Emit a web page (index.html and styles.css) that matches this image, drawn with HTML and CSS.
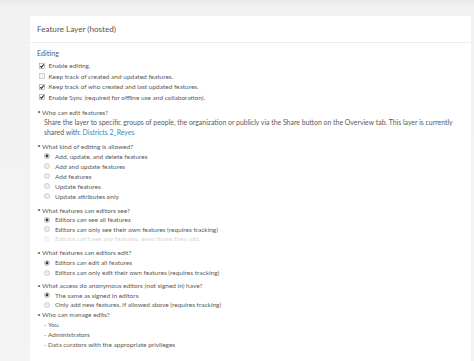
FILE: index.html
```html
<!DOCTYPE html>
<html>
<head>
<meta charset="utf-8">
<link rel="stylesheet" href="styles.css">
</head>
<body>
<div class="page">
  <div class="panel">
    <div class="panel-header">Feature Layer (hosted)</div>
    <div class="panel-body">
      <div class="section-title">Editing</div>
      <ul class="checks">
        <li><svg class="cb" viewBox="0 0 6 6"><rect x=".4" y=".4" width="5.2" height="5.2" fill="#fff" stroke="#9a9a9a" stroke-width=".6"/><path d="M1.3 3.1 L2.5 4.4 L4.8 1.3" stroke="#333" fill="none" stroke-width="1.1"/></svg>Enable editing.</li>
        <li><svg class="cb" viewBox="0 0 6 6"><rect x=".4" y=".4" width="5.2" height="5.2" fill="#f4f4f4" stroke="#b5b5b5" stroke-width=".6"/></svg>Keep track of created and updated features.</li>
        <li><svg class="cb" viewBox="0 0 6 6"><rect x=".4" y=".4" width="5.2" height="5.2" fill="#fff" stroke="#9a9a9a" stroke-width=".6"/><path d="M1.3 3.1 L2.5 4.4 L4.8 1.3" stroke="#333" fill="none" stroke-width="1.1"/></svg>Keep track of who created and last updated features.</li>
        <li><svg class="cb" viewBox="0 0 6 6"><rect x=".4" y=".4" width="5.2" height="5.2" fill="#fff" stroke="#9a9a9a" stroke-width=".6"/><path d="M1.3 3.1 L2.5 4.4 L4.8 1.3" stroke="#333" fill="none" stroke-width="1.1"/></svg>Enable Sync (required for offline use and collaboration).</li>
      </ul>

      <div class="q q-first"><span class="bullet">•</span>Who can edit features?</div>
      <p class="share">Share the layer to specific groups of people, the organization or publicly via the Share button on the Overview tab. This layer is currently<br>shared with: <a class="link">Districts 2_Reyes</a></p>

      <div class="q"><span class="bullet">•</span>What kind of editing is allowed?</div>
      <ul class="radios">
        <li><svg class="rd" viewBox="0 0 6 6"><circle cx="3" cy="3" r="2.6" fill="#e9e9e9" stroke="#a8a8a8" stroke-width=".6"/><circle cx="3" cy="3" r="1.4" fill="#3c3c3c"/></svg>Add, update, and delete features</li>
        <li><svg class="rd" viewBox="0 0 6 6"><circle cx="3" cy="3" r="2.6" fill="#eeeeee" stroke="#bdbdbd" stroke-width=".6"/></svg>Add and update features</li>
        <li><svg class="rd" viewBox="0 0 6 6"><circle cx="3" cy="3" r="2.6" fill="#eeeeee" stroke="#bdbdbd" stroke-width=".6"/></svg>Add features</li>
        <li><svg class="rd" viewBox="0 0 6 6"><circle cx="3" cy="3" r="2.6" fill="#eeeeee" stroke="#bdbdbd" stroke-width=".6"/></svg>Update features</li>
        <li><svg class="rd" viewBox="0 0 6 6"><circle cx="3" cy="3" r="2.6" fill="#eeeeee" stroke="#bdbdbd" stroke-width=".6"/></svg>Update attributes only</li>
      </ul>

      <div class="q"><span class="bullet">•</span>What features can editors see?</div>
      <ul class="radios tight">
        <li><svg class="rd" viewBox="0 0 6 6"><circle cx="3" cy="3" r="2.6" fill="#e9e9e9" stroke="#a8a8a8" stroke-width=".6"/><circle cx="3" cy="3" r="1.4" fill="#3c3c3c"/></svg>Editors can see all features</li>
        <li><svg class="rd" viewBox="0 0 6 6"><circle cx="3" cy="3" r="2.6" fill="#eeeeee" stroke="#bdbdbd" stroke-width=".6"/></svg>Editors can only see their own features (requires tracking)</li>
        <li class="disabled"><svg class="rd" viewBox="0 0 6 6"><circle cx="3" cy="3" r="2.6" fill="#f8f8f8" stroke="#e6e6e6" stroke-width=".6"/></svg>Editors can't see any features, even those they add.</li>
      </ul>

      <div class="q"><span class="bullet">•</span>What features can editors edit?</div>
      <ul class="radios">
        <li><svg class="rd" viewBox="0 0 6 6"><circle cx="3" cy="3" r="2.6" fill="#e9e9e9" stroke="#a8a8a8" stroke-width=".6"/><circle cx="3" cy="3" r="1.4" fill="#3c3c3c"/></svg>Editors can edit all features</li>
        <li><svg class="rd" viewBox="0 0 6 6"><circle cx="3" cy="3" r="2.6" fill="#eeeeee" stroke="#bdbdbd" stroke-width=".6"/></svg>Editors can only edit their own features (requires tracking)</li>
      </ul>

      <div class="q q-anon"><span class="bullet">•</span>What access do anonymous editors (not signed in) have?</div>
      <ul class="radios tight">
        <li><svg class="rd" viewBox="0 0 6 6"><circle cx="3" cy="3" r="2.6" fill="#e9e9e9" stroke="#a8a8a8" stroke-width=".6"/><circle cx="3" cy="3" r="1.4" fill="#3c3c3c"/></svg>The same as signed in editors</li>
        <li><svg class="rd" viewBox="0 0 6 6"><circle cx="3" cy="3" r="2.6" fill="#eeeeee" stroke="#bdbdbd" stroke-width=".6"/></svg>Only add new features, if allowed above (requires tracking)</li>
      </ul>

      <div class="q q-manage"><span class="bullet">•</span>Who can manage edits?</div>
      <ul class="managers">
        <li><span class="dash">-</span>You</li>
        <li><span class="dash">-</span>Administrators</li>
        <li><span class="dash">-</span>Data curators with the appropriate privileges</li>
      </ul>
    </div>
  </div>
</div>
</body>
</html>
```

FILE: styles.css
```css
html, body {
  margin: 0;
  padding: 0;
}

body {
  background: linear-gradient(#e9e9e9, #f2f2f2 6px, #f3f3f3);
  font-family: Lato, "Liberation Sans", sans-serif;
  color: #5a5a5a;
  width: 474px;
  height: 361px;
  overflow: hidden;
}

.page {
  padding: 16px 3px 0 30px;
  height: 361px;
  box-sizing: border-box;
}

.panel {
  background: #fff;
  height: 345px;
}

.panel-header {
  height: 26px;
  line-height: 26px;
  padding-left: 7px;
  font-size: 8.1px;
  color: #555;
  border-bottom: 1px solid #eeeeee;
}

.panel-body {
  padding: 6px 0 0 7px;
  font-size: 6.5px;
}

.section-title {
  font-size: 7.2px;
  line-height: 10px;
  height: 10px;
  color: #5c5c5c;
}

ul {
  list-style: none;
  margin: 0;
  padding: 0;
}

.checks {
  margin-top: 1.5px;
}

.checks li {
  display: flex;
  align-items: center;
  height: 10.5px;
  white-space: nowrap;
}

.cb {
  width: 6px;
  height: 6px;
  margin: 0 4px 0 1.5px;
  flex: none;
}

.q {
  display: flex;
  align-items: center;
  height: 10px;
  margin-top: 4px;
  white-space: nowrap;
}

.q-first {
  margin-top: 4.5px;
}

.q-anon {
  margin-top: 3.2px;
}

.q-manage {
  margin-top: 0;
}

.bullet {
  width: 4.5px;
  margin-left: 0.5px;
  font-size: 5px;
  flex: none;
}

.share {
  margin: 0;
  padding-left: 7px;
  line-height: 10px;
  font-size: 6.9px;
  white-space: nowrap;
}

.link {
  color: #3a8bb5;
}

.radios li {
  display: flex;
  align-items: center;
  height: 10px;
  padding-left: 7px;
  white-space: nowrap;
}

.radios.tight li {
  height: 9.5px;
}

.rd {
  width: 6px;
  height: 6px;
  margin-right: 5px;
  flex: none;
}

.radios li.disabled {
  color: #d6d6d6;
}

.managers li {
  display: flex;
  align-items: center;
  height: 9.8px;
  padding-left: 7px;
  white-space: nowrap;
}

.dash {
  width: 4px;
  flex: none;
}
```
